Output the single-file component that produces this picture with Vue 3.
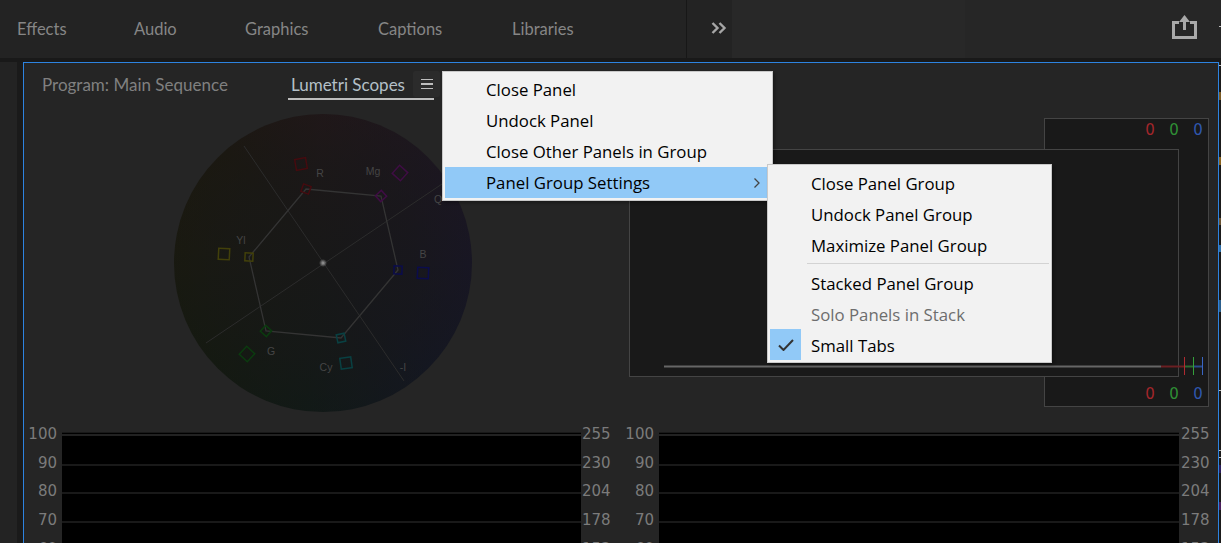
<script setup>
const tabs = [
  { label: 'Effects', w: 117 },
  { label: 'Audio', w: 111 },
  { label: 'Graphics', w: 133 },
  { label: 'Captions', w: 134 },
  { label: 'Libraries', w: 174 }
]
const leftScale = ['100', '90', '80', '70', '60']
const rightScale = ['255', '230', '204', '178', '153']
const menuOne = ['Close Panel', 'Undock Panel', 'Close Other Panels in Group']
const inner = '306,189 381,196 398,270 341,338 266,331 249,257'
const marks = [
  { c: '#450b0f', x: 306, y: 189, s: 8, r: 20 },
  { c: '#3f0d44', x: 381, y: 196, s: 8, r: 48 },
  { c: '#0b0c4c', x: 398, y: 270, s: 8, r: 2 },
  { c: '#094042', x: 341, y: 338, s: 8, r: -12 },
  { c: '#0b3b0f', x: 266, y: 331, s: 8, r: 42 },
  { c: '#42400a', x: 249, y: 257, s: 8, r: 3 },
  { c: '#450b0f', x: 301, y: 164, s: 11, r: -10 },
  { c: '#3f0d44', x: 400, y: 173, s: 11, r: 42 },
  { c: '#0b0c4c', x: 423, y: 273, s: 11, r: 3 },
  { c: '#094042', x: 346, y: 363, s: 11, r: -8 },
  { c: '#0b3b0f', x: 247, y: 354, s: 11, r: 43 },
  { c: '#42400a', x: 224, y: 254, s: 11, r: 3 }
]
const names = [
  { t: 'R', x: 320, y: 177 },
  { t: 'Mg', x: 373, y: 175 },
  { t: 'Q', x: 438, y: 203 },
  { t: 'B', x: 423, y: 258 },
  { t: 'Cy', x: 326, y: 371 },
  { t: 'G', x: 271, y: 355 },
  { t: '-I', x: 403, y: 371 },
  { t: 'Yl', x: 241, y: 244 }
]
const readout = [
  { t: '0', x: 1150, c: '#a3262b' },
  { t: '0', x: 1174, c: '#2f8f35' },
  { t: '0', x: 1198, c: '#2f57ad' }
]
const ticks = [
  { y: 26, h: 1, c: '#bcbcbc' },
  { y: 65, h: 1, c: '#bcbcbc' },
  { y: 92, h: 8, c: '#7a5a24' },
  { y: 157, h: 8, c: '#8a6420' },
  { y: 218, h: 7, c: '#6a5434' },
  { y: 245, h: 7, c: '#2f6fa8' },
  { y: 300, h: 12, c: '#2c5f8c' },
  { y: 390, h: 1, c: '#bcbcbc' },
  { y: 450, h: 1, c: '#bcbcbc' },
  { y: 457, h: 1, c: '#bcbcbc' },
  { y: 465, h: 8, c: '#2b1f5c' },
  { y: 502, h: 8, c: '#4a1f5c' }
]
</script>

<template>
  <div class="app">
    <header class="topbar">
      <nav class="tabs">
        <span v-for="t in tabs" :key="t.label" class="tab" :style="{ width: t.w + 'px' }">{{ t.label }}</span>
      </nav>
      <div class="more">
        <svg width="16" height="14" viewBox="0 0 16 14" fill="none" stroke="#a6a6a6" stroke-width="2.4">
          <path d="M1.500 2l5 5-5 5M8.500 2l5 5-5 5" />
        </svg>
      </div>
      <div class="spacer"></div>
      <div class="share">
        <svg width="25" height="24" viewBox="0 0 25 24" fill="none" stroke="#a9a9a9">
          <path d="M7 7.500H1.500v15h22v-15H18" stroke-width="3" />
          <path d="M12.500 15V5" stroke-width="3" />
          <path d="M7 7L12.500 0 18 7z" fill="#a9a9a9" stroke="none" />
        </svg>
      </div>
    </header>

    <main class="body">
      <aside class="left-strip"></aside>
      <section class="panel">
        <div class="panel-tabs">
          <span class="ptab">Program: Main Sequence</span>
          <span class="ptab active">Lumetri Scopes</span>
          <span class="burger"><i></i><i></i><i></i></span>
        </div>

        <div class="scope">
          <div class="disc"></div>
          <svg class="canvas" width="1194" height="332" viewBox="24 100 1194 332">
            <defs>
              <radialGradient id="glow">
                <stop offset="0" stop-color="#a0a0a0" />
                <stop offset="1" stop-color="#a0a0a0" stop-opacity="0" />
              </radialGradient>
            </defs>
            <g class="soft" fill="none">
              <path d="M244 146L404 381M442 184L206 343" stroke="#2c2c2c" />
              <polygon :points="inner" stroke="#343434" stroke-width="1.300" />
              <rect
                v-for="(m, i) in marks"
                :key="i"
                :x="m.x - m.s / 2"
                :y="m.y - m.s / 2"
                :width="m.s"
                :height="m.s"
                :stroke="m.c"
                stroke-width="1.500"
                :transform="`rotate(${m.r} ${m.x} ${m.y})`"
              />
            </g>
            <circle cx="323" cy="263" r="4" fill="url(#glow)" />
            <text v-for="n in names" :key="n.t" class="vname" :x="n.x" :y="n.y">{{ n.t }}</text>

            <rect class="box" x="1044.500" y="118.500" width="164" height="288" />
            <rect class="box" x="629.500" y="149.500" width="549" height="227" />
            <path d="M664 366.500H1161" stroke="#666" stroke-width="2" />
            <path d="M1161 366.500h23" stroke="#6b1f22" stroke-width="2" />
            <path d="M1184 366.500h9" stroke="#2c6b30" stroke-width="2" />
            <path d="M1193 366.500h9" stroke="#2a4a8a" stroke-width="2" />
            <path d="M1184.500 357v18" stroke="#b02a30" />
            <path d="M1193.500 357v18" stroke="#34a03b" />
            <path d="M1202.500 357v18" stroke="#3a66c4" />
            <text v-for="r in readout" :key="'a' + r.x" class="read" :x="r.x" :y="135" :fill="r.c">{{ r.t }}</text>
            <text v-for="r in readout" :key="'b' + r.x" class="read" :x="r.x" :y="399" :fill="r.c">{{ r.t }}</text>
          </svg>
        </div>

        <div class="waves">
          <div class="scale first">
            <span v-for="v in leftScale" :key="v">{{ v }}</span>
          </div>
          <div class="plot first-plot"><i v-for="v in leftScale" :key="v"></i></div>
          <div class="scale nums">
            <span v-for="v in rightScale" :key="v">{{ v }}</span>
          </div>
          <div class="scale second">
            <span v-for="v in leftScale" :key="v">{{ v }}</span>
          </div>
          <div class="plot second-plot"><i v-for="v in leftScale" :key="v"></i></div>
          <div class="scale nums">
            <span v-for="v in rightScale" :key="v">{{ v }}</span>
          </div>
        </div>
      </section>
      <aside class="right-strip"></aside>
    </main>

    <i v-for="k in ticks" :key="k.y" class="tick" :style="{ top: k.y + 'px', height: k.h + 'px', background: k.c }"></i>

    <div class="menu menu-one">
      <div v-for="m in menuOne" :key="m" class="item"><span>{{ m }}</span></div>
      <div class="item hot">
        <span>Panel Group Settings</span>
        <svg class="arrow" width="8" height="12" viewBox="0 0 8 12" fill="none" stroke="#444" stroke-width="1.300">
          <path d="M1.500 1.500L6 6l-4.500 4.500" />
        </svg>
      </div>
    </div>

    <div class="menu menu-two">
      <div class="item"><span>Close Panel Group</span></div>
      <div class="item"><span>Undock Panel Group</span></div>
      <div class="item"><span>Maximize Panel Group</span></div>
      <div class="sep"></div>
      <div class="item"><span>Stacked Panel Group</span></div>
      <div class="item off"><span>Solo Panels in Stack</span></div>
      <div class="item">
        <span class="check">
          <svg width="16" height="12" viewBox="0 0 16 12" fill="none" stroke="#333" stroke-width="2">
            <path d="M1 6.500L5.500 11 15 1" />
          </svg>
        </span>
        <span>Small Tabs</span>
      </div>
    </div>
  </div>
</template>

<style>
html, body { margin: 0; background: #1a1a1a; }
</style>

<style scoped>
.app {
  position: relative;
  width: 1221px;
  height: 543px;
  overflow: hidden;
  display: flex;
  flex-direction: column;
  background: #191919;
}
.topbar {
  height: 58px;
  display: flex;
  background: #232323;
  flex: none;
}
.tabs {
  display: flex;
  align-items: center;
  padding-left: 17px;
  box-sizing: border-box;
  border-right: 1px solid #171717;
  width: 687px;
}
.tab {
  font: 16.500px/1 "Lato", sans-serif;
  color: #868686;
  flex: none;
}
.more {
  width: 45px;
  background: #232323;
  display: flex;
  align-items: center;
  justify-content: center;
  padding: 0 0 2px 18px;
  box-sizing: border-box;
}
.spacer {
  flex: 1;
  background: #282828;
  max-width: 356px;
}
.share {
  flex: 1;
  background: #262626;
  display: flex;
  align-items: center;
  justify-content: flex-end;
  padding-right: 24px;
  padding-bottom: 4px;
  box-sizing: border-box;
}
.body {
  flex: 1;
  margin-top: 4px;
  display: flex;
  min-height: 0;
}
.left-strip {
  width: 23px;
  flex: none;
  background: linear-gradient(90deg, #232323 17px, #1a1a1a 17px);
}
.panel {
  width: 1196px;
  flex: none;
  box-sizing: border-box;
  border: 1px solid #2d83e0;
  border-bottom: 0;
  background: #252525;
  display: flex;
  flex-direction: column;
}
.right-strip {
  flex: 1;
  background: #1a1a1a;
}
.tick {
  position: absolute;
  left: 1219px;
  width: 2px;
}
.panel-tabs {
  height: 37px;
  display: flex;
  flex: none;
  font: 17px/1 "Lato", sans-serif;
  color: #808080;
}
.ptab {
  padding: 13px 0 0 18px;
  width: 264px;
  box-sizing: border-box;
  flex: none;
}
.ptab.active {
  color: #b4c0c8;
  width: 146px;
  padding-left: 3px;
  border-bottom: 2px solid #bdbdbd;
}
.burger {
  position: relative;
  margin: 8px 0 0 -21px;
  width: 27px;
  height: 26px;
  background: #2b2b2b;
  border-radius: 2px;
  display: flex;
  flex-direction: column;
  align-items: center;
  justify-content: center;
  gap: 3px;
}
.burger i {
  display: block;
  width: 12px;
  height: 1.500px;
  background: #bdbdbd;
}
.scope {
  position: relative;
  height: 332px;
  flex: none;
}
.canvas {
  position: absolute;
  left: 0;
  top: 0;
  display: block;
}
.disc {
  position: absolute;
  left: 150px;
  top: 14px;
  width: 298px;
  height: 298px;
  border-radius: 50%;
  background:
    radial-gradient(circle, #181818 0%, rgba(24, 24, 24, 0.7) 45%, rgba(24, 24, 24, 0) 100%),
    conic-gradient(from 0deg, #241719, #1c1526 60deg, #18152a 90deg, #121626 135deg, #0e1a16 185deg, #121a0e 225deg, #1a1a0c 275deg, #1d180e 320deg, #241719);
}
.soft { filter: blur(0.6px); }
.vname {
  font: 10.500px "Liberation Sans", sans-serif;
  fill: #454545;
  text-anchor: middle;
}
.box {
  fill: #191919;
  stroke: #444;
}
.read {
  font: 15px "DejaVu Sans", sans-serif;
  text-anchor: middle;
}
.waves {
  flex: 1;
  display: flex;
  min-height: 0;
}
.scale {
  flex: none;
  font: 15px/28.700px "DejaVu Sans", sans-serif;
  color: #7b7b7b;
  display: flex;
  flex-direction: column;
  margin-top: -12px;
}
.first { width: 33px; text-align: right; }
.second { width: 43px; text-align: right; }
.nums { width: 29px; }
.plot {
  flex: none;
  background: #000;
  border-top: 1px solid #191919;
  box-sizing: border-box;
  padding-top: 1px;
  overflow: hidden;
}
.first-plot { width: 519px; margin-left: 5px; margin-right: 1px; }
.second-plot { width: 520px; margin-left: 5px; margin-right: 2px; }
.plot i {
  display: block;
  height: 28.500px;
  box-sizing: border-box;
  border-top: 2px solid #191919;
}
.plot i:first-child {
  height: 29.700px;
  border-top-color: #222;
}
.menu {
  position: absolute;
  box-sizing: border-box;
  background: #f2f2f2;
  border: 1px solid #c9c9c9;
  padding: 2px;
  font: 16.800px/32px "Open Sans", sans-serif;
  color: #000;
  box-shadow: 2px 2px 3px rgba(0, 0, 0, 0.3);
}
.menu-one {
  left: 442px;
  top: 71px;
  width: 331px;
  height: 130px;
}
.menu-two {
  left: 767px;
  top: 164px;
  width: 285px;
  height: 199px;
  padding-top: 3px;
}
.item {
  position: relative;
  height: 31px;
  white-space: nowrap;
  padding-left: 41px;
}
.hot { background: #91c9f7; }
.arrow {
  position: absolute;
  right: 9px;
  top: 10px;
}
.off { color: #6d6d6d; }
.sep {
  height: 1px;
  margin: 2px 0 4px 37px;
  background: #d3d3d3;
}
.check {
  position: absolute;
  left: 0;
  top: -1px;
  width: 31px;
  height: 31px;
  background: #91c9f7;
  display: flex;
  align-items: center;
  justify-content: center;
}
</style>
